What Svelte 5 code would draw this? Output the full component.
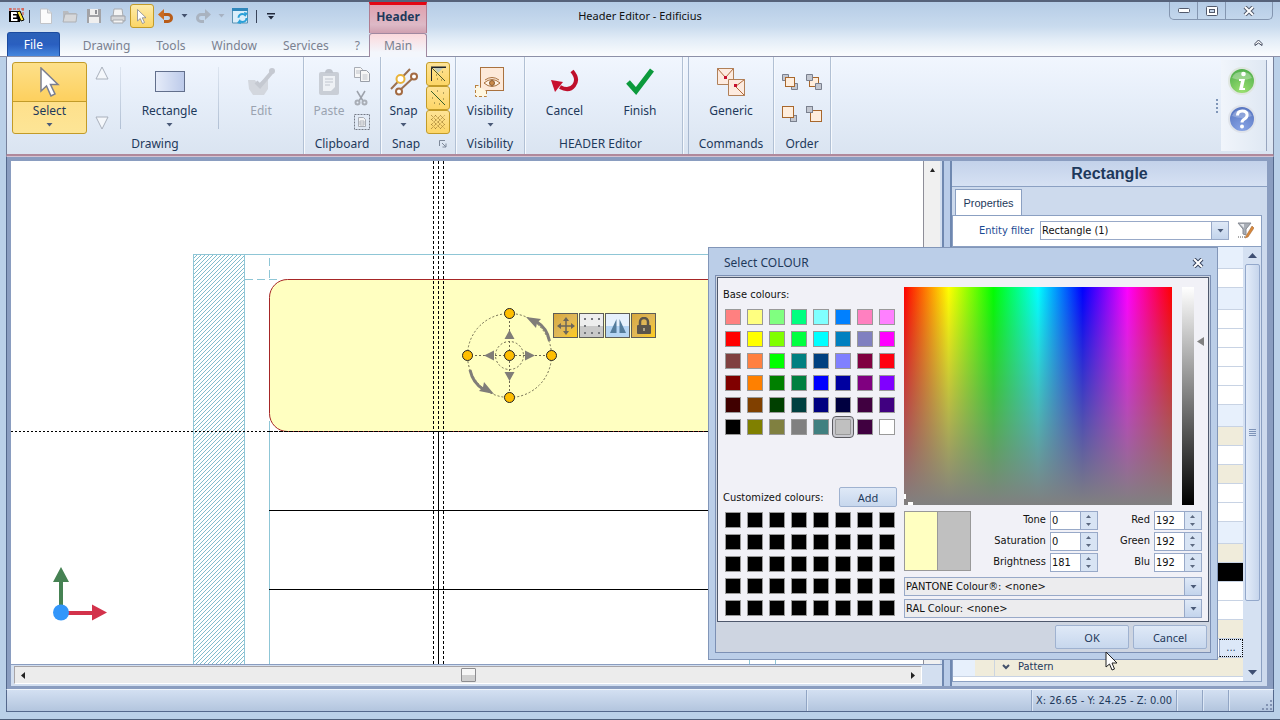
<script>
  let activeTab = $state("Main");
  let selectedColour = $state("#c0c0c0");
  let pickedIndex = $state(45);
  let pantone = $state("none");
  let ral = $state("none");

  const tabs = ["Drawing", "Tools", "Window", "Services", "?"];

  const baseColours = [
    "#ff8080", "#ffff80", "#80ff80", "#00ff80", "#80ffff", "#0080ff", "#ff80c0", "#ff80ff",
    "#ff0000", "#ffff00", "#80ff00", "#00ff40", "#00ffff", "#0080c0", "#8080c0", "#ff00ff",
    "#804040", "#ff8040", "#00ff00", "#008080", "#004080", "#8080ff", "#800040", "#ff0010",
    "#800000", "#ff8000", "#008000", "#008040", "#0000ff", "#0000a0", "#800080", "#8000ff",
    "#400000", "#804000", "#004000", "#004040", "#000080", "#000040", "#400040", "#400080",
    "#000000", "#808000", "#808040", "#808080", "#408080", "#c0c0c0", "#400040", "#ffffff"
  ];
  const customColours = Array(40).fill("#000000");

  const hsb = [
    { id: "tone", label: "Tone", value: 0 },
    { id: "saturation", label: "Saturation", value: 0 },
    { id: "brightness", label: "Brightness", value: 181 }
  ];
  const rgb = [
    { id: "red", label: "Red", value: 192 },
    { id: "green", label: "Green", value: 192 },
    { id: "blue", label: "Blu", value: 192 }
  ];

  // property grid rows: head, item, sub, black, edit
  const rows = [
    "head", "item", "head", "item", "item", "item", "item", "item", "head", "sub",
    "item", "sub", "item", "item", "head", "sub", "black", "item", "item", "sub", "edit"
  ];

  function pick(colour, i) {
    selectedColour = colour;
    pickedIndex = i;
  }
</script>

{#snippet caret()}
  <svg class="caret" width="7" height="4" viewBox="0 0 7 4"><path d="M0.5 0h6L3.5 3.5z" fill="currentColor" /></svg>
{/snippet}

{#snippet arrow(w)}
  <svg width={w} height={w * 1.5} viewBox="0 0 20 30">
    <path d="M1 1v23l5.500-5 4.500 10 4-2-4.500-9.500H18z" fill="#fff" stroke="#7b7f90" stroke-width="1.500" />
  </svg>
{/snippet}

{#snippet spin(f)}
  <label for={f.id}>{f.label}</label>
  <div class="spin">
    <input id={f.id} type="text" value={f.value} />
    <div class="spin_buttons">
      <button aria-label="Increase {f.label}"><svg width="5" height="3"><path d="M2.500 0L5 3H0z" fill="#5c6980" /></svg></button>
      <button aria-label="Decrease {f.label}"><svg width="5" height="3"><path d="M0 0h5L2.500 3z" fill="#5c6980" /></svg></button>
    </div>
  </div>
{/snippet}

<div class="window">
  <header>
    <div class="title">Header Editor - Edificius</div>

    <div class="quick">
      <svg class="logo" width="16" height="16" viewBox="0 0 16 16">
        <path d="M0 1h16M1 0v5M14 0v7" stroke="#e0442c" stroke-dasharray="3 1" />
        <rect x="0" y="3" width="11" height="11" fill="#000" />
        <path d="M8.500 5H3v7h5.500M3 8.500h4.500" fill="none" stroke="#fff" stroke-width="2" />
        <path d="M8 4l4 9 3-1-4-9z" fill="#ffe83c" stroke="#000" />
      </svg>
      <span class="bar"></span>
      <button aria-label="New"><svg width="16" height="16"><path d="M2.500 1h7l4 4v10.500h-11z" fill="#fbfbfb" stroke="#c2c4c8" /><path d="M9.500 1v4h4" fill="#e3e3e3" stroke="#c2c4c8" /></svg></button>
      <button aria-label="Open"><svg width="16" height="16"><path d="M1 3h5l1 2h7v8H1z" fill="#b9bbbf" /><path d="M3 6h12l-1 8H1z" fill="#d7d8da" stroke="#adb0b5" /></svg></button>
      <button aria-label="Save"><svg width="16" height="16"><path d="M1 1h14v14H1z" fill="#a2a3a7" /><path d="M4 1h8v6H4zM3 9h10v6H3z" fill="#efefef" /><path d="M9 2h2v4H9z" fill="#8e9095" /></svg></button>
      <button aria-label="Print"><svg width="16" height="16"><path d="M4 1h8l1 7H3z" fill="#f4f4f4" stroke="#a8abb0" /><path d="M1 8h14v5H1z" fill="#d6d7d9" stroke="#9fa2a8" /><path d="M3 12h10v3H3z" fill="#f4f4f4" stroke="#a8abb0" /></svg></button>
      <button class="on" aria-label="Pointer">{@render arrow(10)}</button>
      <button aria-label="Undo"><svg width="16" height="16"><path d="M4 6.500h6a3.500 3.500 0 0 1 0 7H6" fill="none" stroke="#b85c18" stroke-width="3" /><path d="M0 6.500L6 1v11z" fill="#c96a20" /></svg></button>
      <span class="drop dark">{@render caret()}</span>
      <button aria-label="Redo"><svg width="16" height="16"><path d="M12 6.500H6a3.500 3.500 0 0 0 0 7h3" fill="none" stroke="#a9b3c0" stroke-width="3" /><path d="M16 6.500L10 1v11z" fill="#a9b3c0" /></svg></button>
      <span class="drop">{@render caret()}</span>
      <button aria-label="Refresh"><svg width="17" height="16"><path d="M.5 1h15v14H.500z" fill="#dbeefa" stroke="#5a93b4" /><path d="M0 0h16v3H0z" fill="#2f87bb" /><circle cx="10.500" cy="10" r="4" fill="none" stroke="#2aa0d8" stroke-width="2" stroke-dasharray="9 3.500" /><path d="M12 4l4 1-3 4zM9 16l-4-1 3-4z" fill="#2aa0d8" /></svg></button>
      <span class="bar"></span>
      <button class="more" aria-label="Customize toolbar"><svg width="8" height="7"><path d="M0 0h8v1.500H0zM1 3h6L4 6.500z" fill="#20283a" /></svg></button>
    </div>

    <nav>
      <button class="file">File</button>
      {#each tabs as tab}
        <button class="tab" onclick={() => (activeTab = tab)}>{tab}</button>
      {/each}
    </nav>

    <div class="context">
      <div class="context_name">Header</div>
      <button class="context_tab" onclick={() => (activeTab = "Main")}>Main</button>
    </div>

    <div class="controls">
      <button aria-label="Minimize"><svg width="12" height="5"><rect x=".5" y=".5" width="11" height="4" rx="1" fill="#fff" stroke="#525a6c" /></svg></button>
      <button aria-label="Maximize"><svg width="12" height="10"><rect x=".5" y=".5" width="11" height="9" rx="1" fill="#fff" stroke="#525a6c" /><rect x="3.500" y="3.500" width="5" height="3" fill="#c6d6ea" stroke="#525a6c" /></svg></button>
      <button class="wide" aria-label="Close"><svg width="12" height="10"><path d="M2 1l8 8M10 1L2 9" stroke="#525a6c" stroke-width="4" /><path d="M2 1l8 8M10 1L2 9" stroke="#fff" stroke-width="2" /></svg></button>
    </div>
    <button class="collapse" aria-label="Collapse ribbon"><svg width="9" height="8"><path d="M1 4.500L4.500 1 8 4.500v2L4.500 4 1 6.500z" fill="#fff" stroke="#3c4458" /></svg></button>
  </header>

  <div class="ribbon">
    <section class="group">
      <div class="tools drawing">
        <button class="big select">
          <span class="pic">{@render arrow(20)}</span>
          <span>Select</span>{@render caret()}
        </button>
        <div class="steps">
          <button aria-label="Previous"><svg width="14" height="14"><path d="M7 1l6 12H1z" fill="#f4f7fb" stroke="#a9b0bc" /></svg></button>
          <button aria-label="Next"><svg width="14" height="14"><path d="M1 1h12L7 13z" fill="#f4f7fb" stroke="#a9b0bc" /></svg></button>
        </div>
        <span class="rule"></span>
        <button class="big w97">
          <span class="pic">
            <svg width="30" height="22">
              <defs><linearGradient id="rectfill"><stop offset="0" stop-color="#e6ecf9" /><stop offset="1" stop-color="#bccaea" /></linearGradient></defs>
              <rect x=".5" y=".5" width="29" height="20" fill="url(#rectfill)" stroke="#626f8c" />
            </svg>
          </span>
          <span>Rectangle</span>{@render caret()}
        </button>
        <span class="rule"></span>
        <button class="big w84" disabled>
          <span class="pic"><svg width="28" height="28"><path d="M1 12h7l3 4 5-4h5v9l-4 6H6l-4-6z" fill="#d3d7de" /><path d="M9 14l4 4L25 4" fill="none" stroke="#c5c9d1" stroke-width="4" /><circle cx="25" cy="3" r="3" fill="#c5c9d1" /></svg></span>
          <span>Edit</span>
        </button>
      </div>
      <h2>Drawing</h2>
    </section>

    <section class="group">
      <div class="tools">
        <button class="big w50" disabled>
          <span class="pic"><svg width="22" height="28"><rect x="1" y="4" width="20" height="23" rx="2" fill="#c9ced6" /><path d="M5 8h12v11l-4 4H5z" fill="#eef1f5" /><path d="M7 5a4 4 0 0 1 8 0z" fill="#bfc4cd" /><path d="M7 11h8M7 14h8M7 17h5" stroke="#c0c5ce" /></svg></span>
          <span>Paste</span>
        </button>
        <div class="small">
          <button aria-label="Copy"><svg width="16" height="16"><path d="M.5 1.500h6l2 2v8h-8z" fill="#f6f6f6" stroke="#a9adb5" /><path d="M6.500 4.500h6l3 3v8h-9z" fill="#f6f6f6" stroke="#9a9fa8" /><path d="M8.500 9h5M8.500 11h5M8.500 13h5M2 5h4M2 7h4" stroke="#bfc3ca" /></svg></button>
          <button aria-label="Cut"><svg width="14" height="16"><path d="M3 1l6 10M11 1L5 11" stroke="#9da2ab" stroke-width="1.500" /><circle cx="3.500" cy="12.500" r="2" fill="none" stroke="#a9aeb6" stroke-width="2" /><circle cx="10.500" cy="12.500" r="2" fill="none" stroke="#a9aeb6" stroke-width="2" /></svg></button>
          <button aria-label="Copy selection"><svg width="16" height="16"><rect x=".5" y=".5" width="15" height="15" fill="none" stroke="#747a86" stroke-dasharray="2 1" /><path d="M4.500 3.500h5l2 2v7h-7z" fill="#f4f4f4" stroke="#a9adb5" /><path d="M6 7h4v4H6zM6 9h4" fill="none" stroke="#b5b9c1" /></svg></button>
        </div>
      </div>
      <h2>Clipboard</h2>
    </section>

    <section class="group snap">
      <div class="tools">
        <button class="big w45">
          <span class="pic"><svg width="28" height="28"><path d="M1 21L20 1M9 23L24 9" stroke="#9c7150" stroke-width="2" /><circle cx="10.500" cy="11" r="4" fill="#fff" stroke="#e9b43a" stroke-width="2" /><circle cx="24" cy="8.500" r="3" fill="#fff" stroke="#a36a42" stroke-width="2" /><circle cx="9" cy="23.500" r="3" fill="#fff" stroke="#a36a42" stroke-width="2" /></svg></span>
          <span>Snap</span>{@render caret()}
        </button>
        <div class="toggles">
          <button aria-label="Object snap"><svg width="16" height="16"><path d="M1.500 15V1.500H16" fill="none" stroke="#20242c" /><path d="M1 1h15" stroke="#20242c" /><path d="M4 2h9L8 7z" fill="#c3cdbd" /><path d="M2 2l13 13" stroke="#4f5a2c" /><path d="M7 13h1M12 6h1M6 9h1M11 14h1" stroke="#6b6430" /></svg></button>
          <button aria-label="Line snap"><svg width="16" height="16"><path d="M1 1l14 14" stroke="#35602c" /><path d="M7 1h1M13 3h1M2 8h1M13 9h1M4 13h1M9 14h1" stroke="#6b6430" /></svg></button>
          <button aria-label="Grid snap"><svg width="16" height="16"><path d="M1 6l5-5M1 11L11 1M1 15L15 1M5 15L15 5M10 15l5-5M1 10l5 5M1 5l10 10M1 1l14 14M5 1l10 10M10 1l5 5" stroke="#a07c30" stroke-dasharray="1 1" /></svg></button>
        </div>
      </div>
      <h2>Snap</h2>
      <button class="launcher" aria-label="Snap options"><svg width="8" height="8"><path d="M.5 6V.500H6M3 3l4 4M7 3.500V7H3.500" fill="none" stroke="#7d8899" /></svg></button>
    </section>

    <section class="group">
      <div class="tools">
        <button class="big w68">
          <span class="pic"><svg width="30" height="30"><rect x="5.500" y=".5" width="23" height="23" fill="#fde9d9" stroke="#a9713e" /><path d="M.5 18.500h5M.5 18v11.500h11V24" fill="#fff7e0" stroke="#b8813e" stroke-dasharray="3 2" /><path d="M9 16q8-7 16 0q-8 7-16 0z" fill="#fff3e6" stroke="#a9713e" /><circle cx="17" cy="16" r="2.500" fill="#c98a4c" stroke="#8c5c30" /><path d="M10 13q7-5 14 0" fill="none" stroke="#a9713e" /></svg></span>
          <span>Visibility</span>{@render caret()}
        </button>
      </div>
      <h2>Visibility</h2>
    </section>

    <section class="group last">
      <div class="tools">
        <button class="big w79">
          <span class="pic"><svg width="28" height="26"><path d="M21 2q7 8 2 14.500t-14 1.500" fill="none" stroke="#bf0f2b" stroke-width="4" /><path d="M0 11l12 2-8 10z" fill="#c8102e" /></svg></span>
          <span>Cancel</span>
        </button>
        <button class="big w72">
          <span class="pic"><svg width="28" height="28"><path d="M2 14l8 9L26 2" fill="none" stroke="#0c9a3c" stroke-width="5" /></svg></span>
          <span>Finish</span>
        </button>
      </div>
      <h2>HEADER Editor</h2>
    </section>

    <section class="group">
      <div class="tools">
        <button class="big w84">
          <span class="pic"><svg width="30" height="30"><path d="M1.500 1.500h16v16h-16z" fill="#fdebe0" stroke="#b08058" /><path d="M12.500 12.500h16v16h-16z" fill="#fdebe0" stroke="#b08058" /><path d="M1.500 1.500l8 9 8-9M28.500 12.500l-9 7 9 9" fill="none" stroke="#b06a3c" /><path d="M8 9h3v3H8zM18 17h3v3h-3z" fill="#c8102e" /></svg></span>
          <span>Generic</span>
        </button>
      </div>
      <h2>Commands</h2>
    </section>

    <section class="group">
      <div class="tools order">
        <button aria-label="Bring forward"><svg width="16" height="16"><path d="M.5.500h6v6h-6zM9.500 9.500h6v6h-6z" fill="#c3c7d0" stroke="#7a808e" /><rect x="3.500" y="3.500" width="9" height="9" fill="#ffeedd" stroke="#a8672c" /></svg></button>
        <button aria-label="Send backward"><svg width="16" height="16"><rect x="3.500" y="3.500" width="9" height="9" fill="#ffeedd" stroke="#a8672c" /><path d="M.5.500h6v6h-6zM9.500 9.500h6v6h-6z" fill="#c3c7d0" stroke="#7a808e" /></svg></button>
        <button aria-label="Bring to front"><svg width="16" height="16"><rect x="8.500" y="9.500" width="6" height="6" fill="#c3c7d0" stroke="#7a808e" /><rect x=".5" y=".5" width="11" height="11" fill="#ffeedd" stroke="#a8672c" /></svg></button>
        <button aria-label="Send to back"><svg width="16" height="16"><rect x="4.500" y="4.500" width="11" height="11" fill="#ffeedd" stroke="#a8672c" /><rect x=".5" y=".5" width="6" height="6" fill="#c3c7d0" stroke="#7a808e" /></svg></button>
      </div>
      <h2>Order</h2>
    </section>

    <div class="grip"><i></i><i></i><i></i><i></i></div>
    <div class="help">
      <button class="info" aria-label="Information"><svg width="28" height="28">
        <defs><radialGradient id="green" cx=".5" cy=".9" r=".9"><stop offset="0" stop-color="#9be070" /><stop offset="1" stop-color="#4fae4c" /></radialGradient></defs>
        <circle cx="14" cy="14" r="13" fill="url(#green)" stroke="#dfe6e0" stroke-width="2" /><path d="M4 11a10.500 9 0 0 1 20 0q-10 4-20 0z" fill="#fff" opacity=".3" />
        <circle cx="15.500" cy="7" r="2.300" fill="#fff" /><path d="M11 12h6l-2 9h2v2h-6l2-9h-2z" fill="#fff" /></svg></button>
      <button aria-label="Help"><svg width="28" height="28">
        <defs><radialGradient id="blue" cx=".5" cy=".9" r=".9"><stop offset="0" stop-color="#88a4e6" /><stop offset="1" stop-color="#5674bf" /></radialGradient></defs>
        <circle cx="14" cy="14" r="13" fill="url(#blue)" stroke="#dfe3ea" stroke-width="2" /><path d="M4 11a10.500 9 0 0 1 20 0q-10 4-20 0z" fill="#fff" opacity=".25" />
        <path d="M9.500 10.500q0-4.500 4.800-4.500t4.800 4q0 2.500-2.600 4t-2.500 3.500" fill="none" stroke="#fff" stroke-width="3" /><circle cx="14" cy="21.500" r="2" fill="#fff" /></svg></button>
    </div>
  </div>

  <main>
    <div class="editor">
      <div class="view">
        <div class="canvas">
          <svg class="drawing_area">
            <defs>
              <pattern id="hatch" width="4" height="4" patternUnits="userSpaceOnUse">
                <path d="M-1 1l2-2M0 4l4-4M3 5l2-2" stroke="#82bccd" />
              </pattern>
            </defs>
            <g stroke="#8fc6d6" shape-rendering="crispEdges">
              <rect x="182.500" y="93.500" width="51" height="900" fill="url(#hatch)" />
              <path d="M182 93.500h2000" />
              <path d="M258.500 97v22" stroke-dasharray="8 4" />
              <path d="M234 118.500h32" stroke-dasharray="8 4" />
              <path d="M258.500 260v900M738.500 118v900M764.500 93v900" />
            </g>
            <path d="M900 118.500H276.500a18 18 0 0 0-18 18v116a18 18 0 0 0 18 18H900" fill="#ffffc1" stroke="#a62626" />
            <g stroke="#000" shape-rendering="crispEdges">
              <path d="M258 349.500h2000M258 428.500h2000" />
              <path d="M0 270.500h258" stroke-dasharray="2 2" />
              <path d="M258 270.500h2000" stroke-dasharray="4 1" />
              <path d="M422.500 0v1200M432.500 0v1200M427.500 0v270" stroke-dasharray="3 2" />
              <path d="M427.500 270v900" />
            </g>
            <g fill="none" stroke="#6e6a50" stroke-dasharray="2 2">
              <circle cx="498.500" cy="194.500" r="42" />
              <circle cx="498.500" cy="194.500" r="14" />
              <path d="M456 194.500h84M498.500 152v84" />
            </g>
            <g fill="#807d78">
              <path d="M498.500 169l5 9h-10zM498.500 220l5-9h-10zM473 194.500l10-5v10zM524 194.500l-10-5v10z" />
              <path d="M515 156l15 2-4 4-1 5z" /><path d="M483 233l-15-3 4-4 1-5z" />
              <path d="M526 161q10 6 12.500 19M472 228q-10-6-13-19" fill="none" stroke="#807d78" stroke-width="3" />
            </g>
            <g fill="#ffbe00" stroke="#222">
              <circle cx="498.500" cy="152.500" r="5" /><circle cx="498.500" cy="194.500" r="5" /><circle cx="498.500" cy="236.500" r="5" />
              <circle cx="456.500" cy="194.500" r="5" /><circle cx="540.500" cy="194.500" r="5" />
            </g>
            <path d="M50 450v-30" stroke="#468253" stroke-width="4" /><path d="M50 406l8 15H42z" fill="#468253" />
            <path d="M50 452h32" stroke="#d3324b" stroke-width="4" /><path d="M96 451.500l-15 8v-16z" fill="#d3324b" />
            <circle cx="50" cy="451.500" r="8" fill="#3296fa" />
          </svg>
          <div class="mini">
            <button class="gold" aria-label="Move"><svg width="18" height="18"><path d="M9 2v14M2 9h14" stroke="#6b665a" stroke-width="1.500" /><path d="M9 0l3 4H6zM9 18l3-4H6zM0 9l4-3v6zM18 9l-4-3v6z" fill="#6b665a" /></svg></button>
            <button class="grey" aria-label="Stretch"><svg width="18" height="18"><path d="M1 1h2v2H1zM8 1h2v2H8zM15 1h2v2h-2zM1 8h2v2H1zM15 8h2v2h-2zM1 15h2v2H1zM8 15h2v2H8zM15 15h2v2h-2z" fill="#75777c" /></svg></button>
            <button class="sky" aria-label="Mirror"><svg width="18" height="18"><path d="M7.500 2v14H1zM10.500 2v14H17z" fill="#557d9c" /></svg></button>
            <button class="gold" aria-label="Lock"><svg width="16" height="18"><path d="M4 8V5a4 4 0 0 1 8 0v3" fill="none" stroke="#5b554a" stroke-width="2.500" /><rect x="1" y="8" width="14" height="9" rx="1" fill="#5b554a" /><path d="M8 11v3" stroke="#c8bf9c" stroke-width="1.500" /></svg></button>
          </div>
        </div>
        <div class="vscroll"><svg width="5" height="4"><path d="M2.500 0L5 4H0z" fill="#222" /></svg></div>
      </div>
      <div class="hscroll">
        <svg width="4" height="7"><path d="M4 0v7L0 3.500z" fill="#222" /></svg>
        <span class="thumb"></span>
        <svg width="4" height="7"><path d="M0 0v7l4-3.500z" fill="#222" /></svg>
      </div>
    </div>

    <div class="splitter"></div>

    <aside>
      <h1>Rectangle</h1>
      <div class="pane_tabs"><button>Properties</button></div>
      <div class="pane">
        <div class="filter">
          <label for="entity">Entity filter</label>
          <div class="combo">
            <select id="entity"><option>Rectangle (1)</option></select>
            <span class="combo_button">{@render caret()}</span>
          </div>
          <button class="filter_button" aria-label="Edit filter"><svg width="17" height="17"><path d="M1 1h13L9 7v6l-3-1V7z" fill="#a8adb5" stroke="#868b94" /><path d="M3 2h4v4z" fill="#e8eaee" /><path d="M15 4L9 14l-1 2 3-1 6-9z" fill="#d6883c" stroke="#9c5f2c" stroke-width=".5" /><path d="M1 15h8" stroke="#555" stroke-dasharray="1 1" /></svg></button>
        </div>
        <div class="props">
          <table>
            <tbody>
              {#each rows as row}
                <tr class={row}>
                  <td class="gutter"></td><td class="indent"></td><td></td>
                  <td class="value">{#if row === "edit"}<button>...</button>{/if}</td>
                </tr>
              {/each}
              <tr class="sub">
                <td class="gutter"></td><td class="indent"></td>
                <td class="name" colspan="2"><svg width="8" height="6"><path d="M1 1l3 3 3-3" fill="none" stroke="#43506a" stroke-width="2" /></svg>Pattern</td>
              </tr>
            </tbody>
          </table>
          <div class="pane_scroll">
            <svg width="9" height="5"><path d="M4.500 0L9 5H0z" fill="#3f4f73" /></svg>
            <span class="pane_thumb"><i></i></span>
            <svg class="down" width="9" height="5"><path d="M0 0h9L4.500 5z" fill="#3f4f73" /></svg>
          </div>
        </div>
      </div>
    </aside>
  </main>

  <footer>
    <span class="cell grow"></span>
    <span class="cell mid"></span>
    <span class="cell coords">X: 26.65 - Y: 24.25 - Z: 0.00</span>
    <span class="cell tiny"></span>
    <span class="cell tiny"></span>
    <span class="cell end"><svg width="11" height="11"><path d="M8 0h2v2H8zM4 4h2v2H4zM8 4h2v2H8zM0 8h2v2H0zM4 8h2v2H4zM8 8h2v2H8z" fill="#8293b3" /></svg></span>
  </footer>

  <div class="dialog" role="dialog" aria-labelledby="dialog_title">
    <div class="dialog_head">
      <span id="dialog_title">Select COLOUR</span>
      <button aria-label="Close dialog"><svg width="12" height="10"><path d="M2 1l8 8M10 1L2 9" stroke="#36435e" stroke-width="4" /><path d="M2 1l8 8M10 1L2 9" stroke="#fff" stroke-width="2" /></svg></button>
    </div>
    <div class="dialog_body">
      <div class="picker">
        <div class="palettes">
          <div class="caption">Base colours:</div>
          <div class="swatches base">
            {#each baseColours as colour, i}
              <button class:picked={i === pickedIndex} style="background-color: {colour}" aria-label={colour} onclick={() => pick(colour, i)}></button>
            {/each}
          </div>
          <div class="custom_head">
            <span>Customized colours:</span>
            <button class="push">Add</button>
          </div>
          <div class="swatches custom">
            {#each customColours as colour}
              <button style="background-color: {colour}" aria-label="Custom {colour}"></button>
            {/each}
          </div>
        </div>
        <div class="mixer">
          <div class="spectrum_row">
            <div class="spectrum"><svg width="10" height="12"><path d="M0 1h2v5H0zM4 9h5v3H4z" fill="#fff" /></svg></div>
            <div class="lightness"></div>
            <svg class="pointer" width="7" height="9"><path d="M7 0v9L0 4.500z" fill="#808080" /></svg>
          </div>
          <div class="values">
            <div class="preview"><span></span><span style="background-color: {selectedColour}"></span></div>
            <div class="fields">
              {#each hsb as f}{@render spin(f)}{/each}
            </div>
            <div class="fields">
              {#each rgb as f}{@render spin(f)}{/each}
            </div>
          </div>
          <div class="combo flat">
            <select bind:value={pantone} aria-label="PANTONE Colour"><option value="none">PANTONE Colour®: &lt;none&gt;</option></select>
            <span class="combo_button">{@render caret()}</span>
          </div>
          <div class="combo flat">
            <select bind:value={ral} aria-label="RAL Colour"><option value="none">RAL Colour: &lt;none&gt;</option></select>
            <span class="combo_button">{@render caret()}</span>
          </div>
        </div>
      </div>
      <div class="dialog_buttons">
        <button class="push">OK</button>
        <button class="push">Cancel</button>
      </div>
    </div>
    <svg class="mouse" width="13" height="20"><path d="M1 1v15l3.500-3 2.500 6 2.500-1-2.500-6H12z" fill="#fff" stroke="#222" /></svg>
  </div>
</div>

<style>
  :global(body) {
    background-color: #b9d1ea;
  }
  .window {
    --ui: "Noto Sans", "Open Sans", sans-serif;
    --small: "DejaVu Sans Condensed", "DejaVu Sans", sans-serif;
    position: relative;
    display: flex;
    flex-direction: column;
    min-height: 100vh;
    box-sizing: border-box;
    padding: 0 6px 7px;
    border-top: 2px solid #56627a;
    border-bottom: 1px solid #4d5f7a;
    background-color: #bad0e8;
    font-family: var(--ui);
    font-size: 12px;
    color: #1e395b;
    overflow: hidden;
  }
  button, input, select {
    box-sizing: border-box;
    margin: 0;
    padding: 0;
    border: 0;
    background: none;
    font: inherit;
    color: inherit;
  }
  svg {
    display: block;
    flex: none;
  }

  /* title bar and tabs */
  header {
    display: grid;
    grid-template-columns: 363px 58px 1fr;
    grid-template-rows: 31px 23px;
    margin: 0 -6px;
    padding: 0 6px;
    background: linear-gradient(#b5cce6, #c9dbee 45%, #e3edf7 70%, #fbfcfe);
    border-bottom: 1px solid #8c90a8;
  }
  .title {
    grid-area: 1 / 1 / 2 / 4;
    justify-self: center;
    line-height: 28px;
    font-size: 11px;
    color: #111;
  }
  .quick {
    grid-area: 1 / 1;
    display: flex;
    align-items: center;
    height: 28px;
    padding-left: 3px;
  }
  .quick button {
    display: flex;
    align-items: center;
    justify-content: center;
    width: 24px;
    height: 24px;
  }
  .quick .on {
    border: 1px solid #c29b29;
    border-radius: 3px;
    background: linear-gradient(#fdebaa, #fcd667);
  }
  .quick .more {
    width: 20px;
  }
  .bar {
    width: 1px;
    height: 13px;
    margin: 0 4px;
    background-color: #39445a;
  }
  .drop {
    display: flex;
    justify-content: center;
    width: 13px;
    color: #a7b2c2;
  }
  .dark {
    color: #44526e;
  }
  nav {
    grid-area: 2 / 1;
    display: flex;
    align-items: flex-end;
    padding-left: 1px;
    gap: 8px;
  }
  .tab {
    height: 22px;
    padding: 0 9px;
    color: #7a8190;
  }
  .file {
    width: 55px;
    height: 24px;
    margin-right: 6px;
    border: 1px solid #1b4ba0;
    border-bottom: 0;
    border-radius: 3px 3px 0 0;
    background: linear-gradient(#2c62b8, #2a5fc0 50%, #4586dd);
    color: #fff;
  }
  .context {
    grid-area: 1 / 2 / 3 / 3;
    display: flex;
    flex-direction: column;
    margin-bottom: -1px;
  }
  .context_name {
    height: 28px;
    line-height: 24px;
    border-top: 3px solid #e30613;
    border-left: 1px solid #b07c90;
    border-right: 1px solid #b07c90;
    background: linear-gradient(#e0a0ae, #ddb9c6 70%, #cfa0b0);
    font-weight: bold;
    text-align: center;
  }
  .context_tab {
    flex: 1;
    border: 1px solid #a088a0;
    border-bottom: 0;
    border-radius: 3px 3px 0 0;
    background: linear-gradient(#fbd9dc, #f3f6fc 80%);
    color: #7a8190;
  }
  .controls {
    grid-area: 1 / 3;
    justify-self: end;
    display: flex;
    height: 17px;
    border: 1px solid #8496b0;
    border-top: 0;
    border-radius: 0 0 5px 5px;
    margin-right: 1px;
  }
  .controls button {
    display: flex;
    align-items: center;
    justify-content: center;
    width: 28px;
    border-right: 1px solid #8496b0;
  }
  .controls .wide {
    width: 46px;
    border: 0;
  }
  .collapse {
    grid-area: 2 / 3;
    justify-self: end;
    align-self: start;
    margin: 6px 11px 0 0;
  }

  /* ribbon */
  .ribbon {
    display: flex;
    height: 97px;
    border: 0 solid #76819b;
    border-width: 0 1px;
    border-bottom: 2px solid #b0899b;
    background: linear-gradient(#f1f6fe, #e6eef9 45%, #dae4f1);
  }
  .group {
    position: relative;
    display: flex;
    flex-direction: column;
    justify-content: space-between;
    padding-top: 5px;
    border-right: 1px solid #b1c0d4;
    box-shadow: 1px 0 #f6f9fd;
  }
  .last {
    padding-right: 6px;
    margin-right: 5px;
  }
  .last + .group {
    border-left: 1px solid #a9b9d0;
  }
  h2 {
    margin: 0;
    padding-bottom: 1px;
    line-height: 19px;
    font-size: 12px;
    font-weight: normal;
    text-align: center;
  }
  .tools {
    display: flex;
    height: 72px;
  }
  .drawing {
    padding-left: 5px;
  }
  .big {
    display: flex;
    flex-direction: column;
    align-items: center;
    width: 75px;
    line-height: 20px;
  }
  .big:disabled {
    color: #9aa3b0;
  }
  .pic {
    display: flex;
    align-items: center;
    justify-content: center;
    width: 100%;
    height: 39px;
  }
  .big .caret {
    margin-top: 2px;
    color: #4a5a78;
  }
  .select {
    border: 1px solid #c29b29;
    border-radius: 3px;
    background: linear-gradient(#fde08a, #fdd05e 38px, #c29b29 38px, #c29b29 39px, #fee08c 39px, #fde596);
  }
  .select .pic {
    height: 38px;
  }
  .w97 { width: 97px; }
  .w84 { width: 84px; }
  .w79 { width: 79px; }
  .w72 { width: 72px; }
  .w68 { width: 68px; }
  .w50 { width: 50px; }
  .w45 { width: 45px; }
  .steps {
    display: flex;
    flex-direction: column;
    justify-content: space-between;
    padding: 4px 11px 4px 8px;
  }
  .rule {
    width: 1px;
    margin: 5px 0;
    background: linear-gradient(#dde5f0, #b1c0d4);
  }
  .small {
    display: flex;
    flex-direction: column;
    width: 26px;
  }
  .small button {
    display: flex;
    align-items: center;
    height: 24px;
  }
  .toggles {
    display: flex;
    flex-direction: column;
    padding-right: 5px;
  }
  .toggles button {
    display: flex;
    align-items: center;
    justify-content: center;
    width: 24px;
    height: 24px;
    border: 1px solid #c29b29;
    border-radius: 3px;
    background: linear-gradient(#fee396, #fdd667);
  }
  .snap h2 {
    padding-right: 24px;
  }
  .launcher {
    position: absolute;
    right: 8px;
    bottom: 6px;
  }
  .order {
    display: grid;
    grid-template-columns: 24px 24px;
    grid-template-rows: 32px 32px;
    align-content: center;
    padding: 0 4px;
  }
  .order button {
    display: flex;
    align-items: center;
    justify-content: center;
  }
  .grip {
    display: flex;
    flex-direction: column;
    justify-content: center;
    gap: 2px;
    margin-left: auto;
    margin-right: 3px;
  }
  .grip i {
    width: 2px;
    height: 2px;
    background-color: #8096b8;
  }
  .help {
    display: flex;
    flex-direction: column;
    align-items: center;
    gap: 10px;
    width: 46px;
    margin: 3px 6px 3px 0;
    padding: 7px 3px 0 0;
    box-sizing: border-box;
    border-right: 1px solid #97a5be;
    background: linear-gradient(to right, #f1f5fb, #dfe8f3);
  }

  /* workspace */
  main {
    flex: 1;
    display: flex;
    min-height: 520px;
    border: 1px solid #54688c;
    border-width: 1px 1px 0;
    border-top-color: #d3c3d3;
    padding: 4px 6px 3px 4px;
    background-color: #8a9dc0;
  }
  .editor {
    flex: 1;
    display: flex;
    flex-direction: column;
    min-width: 0;
    background-color: #d3dff0;
  }
  .view {
    flex: 1;
    display: flex;
    border-bottom: 1px solid #8a9dc0;
  }
  .canvas {
    position: relative;
    flex: 1;
    display: flex;
    background-color: #fff;
    overflow: hidden;
  }
  .drawing_area {
    flex: 1;
    width: 100%;
    height: auto;
    min-width: 0;
  }
  .mini {
    position: absolute;
    left: 542px;
    top: 152px;
    display: flex;
    gap: 1px;
  }
  .mini button {
    display: flex;
    align-items: center;
    justify-content: center;
    width: 25px;
    height: 25px;
    border: 1px solid #5d5d58;
  }
  .gold { background: linear-gradient(135deg, #d8a83c, #e0b858 50%, #ffcc1c); }
  .grey { background: linear-gradient(#eee 50%, #c9c9c9 50%); }
  .sky { background: linear-gradient(#e6f1fc 50%, #b5d5f3 50%); }
  .vscroll {
    display: flex;
    justify-content: center;
    width: 16px;
    padding-top: 7px;
    border-left: 1px solid #8e8e98;
    border-right: 2px solid #d3dff0;
    background-color: #f0f0f0;
  }
  .hscroll {
    display: flex;
    align-items: center;
    justify-content: space-between;
    height: 16px;
    margin: 1px 20px 2px 3px;
    padding: 0 6px;
    border: 1px solid #a8a5a8;
    border-color: #a8a5a8 #fff #fff #a8a5a8;
    background-color: #ececec;
  }
  .thumb {
    width: 13px;
    height: 12px;
    border: 1px solid #8d8d90;
    border-radius: 1px;
    background: linear-gradient(#f6f6f6 50%, #cfcfcf 50%);
  }
  .splitter {
    width: 6px;
    border: 1px solid #6f88b0;
    border-width: 0 2px;
    background-color: #b9cce8;
  }
  aside {
    display: flex;
    flex-direction: column;
    width: 315px;
    background-color: #cddaed;
  }
  h1 {
    margin: 0;
    line-height: 25px;
    border-bottom: 1px solid #8ba0c2;
    background: linear-gradient(#c3d2ea, #d6e1f3);
    font-family: "Liberation Sans", Arial, sans-serif;
    font-size: 16px;
    text-align: center;
  }
  .pane_tabs {
    padding: 2px 3px 0;
  }
  .pane_tabs button {
    display: block;
    width: 67px;
    height: 26px;
    border: 1px solid #8ba0c2;
    border-bottom: 0;
    background-color: #fff;
    font-family: "Liberation Sans", Arial, sans-serif;
    font-size: 11px;
  }
  .pane {
    flex: 1;
    display: flex;
    flex-direction: column;
    margin: 0 5px 4px 0;
    border: 1px solid #8ba0c2;
    background-color: #fff;
  }
  .filter {
    display: flex;
    align-items: center;
    justify-content: flex-end;
    gap: 6px;
    padding: 5px 7px 6px 0;
    font-family: var(--small);
    font-size: 11px;
    color: #1b4b94;
  }
  .filter .combo {
    width: 189px;
  }
  .combo {
    display: flex;
    box-sizing: border-box;
    height: 19px;
    border: 1px solid #98a9c8;
    background-color: #fff;
    font-family: var(--small);
    font-size: 11px;
    color: #111;
  }
  .combo select {
    flex: 1;
    min-width: 0;
    appearance: none;
    padding-left: 1px;
    outline: 0;
  }
  .combo_button {
    display: flex;
    align-items: center;
    justify-content: center;
    width: 16px;
    border-left: 1px solid #98a9c8;
    background: linear-gradient(#dfe9f7, #c3d4ec);
    color: #4a5a78;
    pointer-events: none;
  }
  .flat {
    background-color: #ececee;
  }
  .filter_button {
    margin-left: 2px;
  }
  .props {
    flex: 1;
    display: flex;
    border-top: 1px solid #8ba0c2;
    font-family: var(--small);
    font-size: 11px;
  }
  table {
    flex: 1;
    align-self: flex-start;
    border-collapse: separate;
    border-spacing: 0;
    table-layout: fixed;
  }
  td {
    height: 18px;
    padding: 0;
    border-bottom: 1px solid #c8d3e4;
    line-height: 18px;
  }
  .gutter { width: 22px; }
  .indent { width: 19px; }
  .value { text-align: right; }
  .head td {
    height: 21px;
    background-color: #e7f0fc;
  }
  td.gutter {
    background-color: #e7f0fc;
  }
  .sub td:not(.gutter) {
    background-color: #f0ecdb;
  }
  .sub .indent {
    border-right: 1px solid #ccd5e0;
  }
  .black td:not(.gutter) {
    background-color: #000;
  }
  .edit button {
    display: block;
    box-sizing: border-box;
    width: 24px;
    height: 18px;
    margin-left: auto;
    border: 1px dotted #000;
    border-left: 1px solid #98a9c8;
    background-color: #dce8f8;
    line-height: 14px;
  }
  .name svg {
    display: inline-block;
    margin: 0 8px 0 7px;
  }
  .pane_scroll {
    display: flex;
    flex-direction: column;
    align-items: center;
    width: 18px;
    padding: 6px 0;
    background-color: #d5e1f2;
  }
  .pane_thumb {
    display: flex;
    align-items: center;
    justify-content: center;
    box-sizing: border-box;
    width: 15px;
    height: 337px;
    margin-top: 6px;
    border: 1px solid #93a8cb;
    border-radius: 2px;
    background: linear-gradient(to right, #e3ecf9, #c6d5ec);
  }
  .pane_thumb i {
    width: 7px;
    height: 7px;
    background: repeating-linear-gradient(#7d93b8 0 1px, transparent 1px 2px);
  }
  .down {
    margin-top: auto;
  }

  /* status bar */
  footer {
    display: flex;
    height: 21px;
    border: 1px solid #54688c;
    border-top-color: #eef4fb;
    background: linear-gradient(#d3e0f2, #b3c5de);
    font-family: var(--small);
    font-size: 11px;
    line-height: 22px;
  }
  .cell {
    border-right: 1px solid #91a5c4;
    box-shadow: 1px 0 #dce7f5;
  }
  .grow { flex: 1; }
  .mid { width: 224px; }
  .coords { width: 144px; text-align: center; }
  .tiny { width: 25px; }
  .end {
    display: flex;
    align-items: flex-end;
    justify-content: flex-end;
    width: 44px;
    border: 0;
    box-shadow: none;
  }

  /* colour dialog */
  .dialog {
    position: absolute;
    top: 245px;
    right: 62px;
    width: 510px;
    box-sizing: border-box;
    padding: 0 6px 6px;
    border: 1px solid #8296b8;
    background-color: #bbcee8;
  }
  .dialog_head {
    display: flex;
    align-items: center;
    justify-content: space-between;
    height: 27px;
    padding: 2px 7px 0 9px;
    box-sizing: border-box;
  }
  .dialog_body {
    padding: 1px;
    border: 1px solid #7c90b4;
    background-color: #ced5e1;
  }
  .picker {
    display: flex;
    padding: 9px 6px 3px 5px;
    border: 1px solid #4e586c;
    background-color: #f1f1f7;
    font-family: var(--small);
    font-size: 11px;
    color: #111;
  }
  .palettes {
    display: flex;
    flex-direction: column;
    width: 181px;
  }
  .caption {
    line-height: 16px;
    margin-bottom: 6px;
  }
  .swatches {
    display: grid;
    grid-template-columns: repeat(8, 16px);
    gap: 6px;
    padding-left: 2px;
  }
  .base {
    flex: 1;
    align-content: start;
  }
  .custom {
    padding-bottom: 2px;
  }
  .swatches button {
    width: 16px;
    height: 16px;
    border: 1px solid #999;
  }
  .swatches .picked {
    outline: 1px solid #5a5a60;
    outline-offset: 2px;
    border-radius: 1px;
    box-shadow: 0 0 0 2px #c9c9cf;
  }
  .custom_head {
    display: flex;
    align-items: center;
    justify-content: space-between;
    padding-right: 7px;
    margin-bottom: 5px;
  }
  .push {
    width: 74px;
    height: 24px;
    border: 1px solid #9fb2d0;
    border-radius: 2px;
    background: linear-gradient(#dfe9f7, #c7d7ed);
    font-family: var(--ui);
    font-size: 11px;
    color: #1e395b;
  }
  .custom_head .push {
    width: 58px;
    height: 20px;
  }
  .mixer {
    flex: 1;
  }
  .spectrum_row {
    display: flex;
  }
  .spectrum {
    flex: 1;
    display: flex;
    align-items: flex-end;
    height: 218px;
    background:
      linear-gradient(transparent, #808080),
      linear-gradient(to right, #f00, #ff0, #0f0, #0ff, #00f, #f0f, #f00);
  }
  .lightness {
    width: 12px;
    margin: 0 3px 0 10px;
    background: linear-gradient(#fff, #000);
  }
  .pointer {
    margin: 50px -2px 0 0;
  }
  .values {
    display: flex;
    justify-content: space-between;
    margin: 6px 0 5px;
  }
  .preview {
    display: flex;
    width: 65px;
    height: 58px;
    border: 1px solid #999;
  }
  .preview span {
    flex: 1;
    background-color: #ffffc1;
  }
  .preview span + span {
    border-left: 1px solid #999;
  }
  .fields {
    display: grid;
    grid-template-columns: auto 48px;
    gap: 2px 4px;
    align-content: start;
    text-align: right;
    line-height: 18px;
  }
  .spin {
    display: flex;
    box-sizing: border-box;
    height: 19px;
    border: 1px solid #98a9c8;
    background-color: #fff;
  }
  .spin input {
    flex: 1;
    min-width: 0;
    padding-left: 1px;
    outline: 0;
  }
  .spin_buttons {
    display: flex;
    flex-direction: column;
    width: 16px;
    border-left: 1px solid #98a9c8;
    background-color: #d8e4f4;
  }
  .spin_buttons button {
    flex: 1;
    display: flex;
    align-items: center;
    justify-content: center;
  }
  .mixer .combo + .combo {
    margin-top: 3px;
  }
  .dialog_buttons {
    display: flex;
    justify-content: flex-end;
    gap: 4px;
    padding: 3px 2px 2px;
  }
  .mouse {
    position: absolute;
    right: 99px;
    bottom: -12px;
  }
</style>
